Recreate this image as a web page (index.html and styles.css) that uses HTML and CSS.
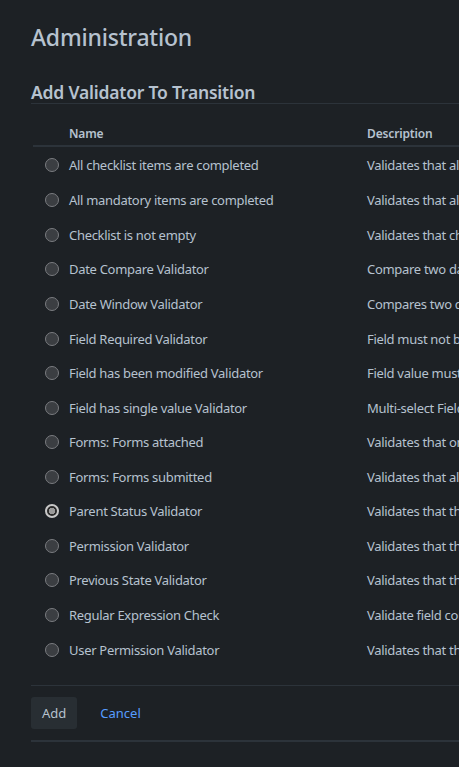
FILE: index.html
```html
<!DOCTYPE html>
<html>
<head>
<meta charset="utf-8">
<link rel="stylesheet" href="styles.css">
</head>
<body>
<div class="page">
  <h1 class="title">Administration</h1>
  <h2 class="subtitle">Add Validator To Transition</h2>
  <table class="grid">
    <thead>
      <tr><th class="c-radio"></th><th class="c-name">Name</th><th class="c-desc">Description</th></tr>
    </thead>
    <tbody>
      <tr><td><span class="radio"></span></td><td>All checklist items are completed</td><td>Validates that all checklist items are completed</td></tr>
      <tr><td><span class="radio"></span></td><td>All mandatory items are completed</td><td>Validates that all mandatory items are completed</td></tr>
      <tr><td><span class="radio"></span></td><td>Checklist is not empty</td><td>Validates that checklist is not empty</td></tr>
      <tr><td><span class="radio"></span></td><td>Date Compare Validator</td><td>Compare two dates</td></tr>
      <tr><td><span class="radio"></span></td><td>Date Window Validator</td><td>Compares two dates</td></tr>
      <tr><td><span class="radio"></span></td><td>Field Required Validator</td><td>Field must not be empty</td></tr>
      <tr><td><span class="radio"></span></td><td>Field has been modified Validator</td><td>Field value must be modified</td></tr>
      <tr><td><span class="radio"></span></td><td>Field has single value Validator</td><td>Multi-select Field</td></tr>
      <tr><td><span class="radio"></span></td><td>Forms: Forms attached</td><td>Validates that one or more forms</td></tr>
      <tr><td><span class="radio"></span></td><td>Forms: Forms submitted</td><td>Validates that all forms</td></tr>
      <tr><td><span class="radio checked"></span></td><td>Parent Status Validator</td><td>Validates that the parent</td></tr>
      <tr><td><span class="radio"></span></td><td>Permission Validator</td><td>Validates that the user</td></tr>
      <tr><td><span class="radio"></span></td><td>Previous State Validator</td><td>Validates that the issue</td></tr>
      <tr><td><span class="radio"></span></td><td>Regular Expression Check</td><td>Validate field contents</td></tr>
      <tr><td><span class="radio"></span></td><td>User Permission Validator</td><td>Validates that the user</td></tr>
    </tbody>
  </table>
  <div class="footer">
    <button class="btn">Add</button>
    <a class="link" href="#">Cancel</a>
  </div>
</div>
</body>
</html>
```
FILE: styles.css
```css
html, body {
  margin: 0;
  padding: 0;
  background: #1d2125;
  overflow: hidden;
}
body {
  font-family: "Noto Sans", "Open Sans", sans-serif;
  color: #b6c2cf;
  width: 459px;
  height: 767px;
}
.page {
  padding: 19px 0 0 31px;
  width: 720px;
}
.title {
  margin: 0;
  font-size: 23px;
  font-weight: 500;
  line-height: 36px;
  color: #b6c2cf;
  letter-spacing: -0.2px;
}
.subtitle {
  margin: 26px 0 0;
  font-size: 17.5px;
  font-weight: 600;
  line-height: 22px;
  color: #b6c2cf;
  padding-bottom: 0;
  border-bottom: 1px solid #2c333a;
  letter-spacing: -0.2px;
}
.grid {
  border-collapse: collapse;
  margin: 21px 0 0 2px;
  width: 690px;
  font-size: 13px;
  letter-spacing: -0.3px;
}
.grid th {
  font-size: 12px;
  font-weight: 600;
  text-align: left;
  padding: 0;
  height: 20px;
  vertical-align: top;
  border-bottom: 2px solid #2c333a;
  color: #b6c2cf;
  letter-spacing: -0.15px;
}
.grid th.c-radio { width: 36px; }
.grid th.c-name { width: 298px; }
.grid td {
  padding: 0;
  height: 34.57px;
  vertical-align: middle;
  white-space: nowrap;
}
.grid tbody tr:first-child td { height: 36px; }
.radio {
  display: block;
  width: 12px;
  height: 12px;
  margin-left: 12px;
  border-radius: 50%;
  background: #3b3e42;
  border: 1px solid #7a7c80;
}
.radio.checked {
  width: 10px;
  height: 10px;
  border: 2px solid #c8c8c8;
  background: radial-gradient(circle, #9a9a9a 0 3px, #2b2b2b 3.5px);
}
.footer {
  margin-top: 18px;
  border-top: 1px solid #2c333a;
  border-bottom: 2px solid #2c333a;
  width: 690px;
  padding: 11px 0 11px;
  display: flex;
  align-items: center;
  gap: 23px;
}
.btn {
  font-family: inherit;
  font-size: 13px;
  color: #b6c2cf;
  background: #282e33;
  border: none;
  border-radius: 3px;
  height: 32px;
  padding: 0 11px;
}
.link {
  color: #579dff;
  text-decoration: none;
  font-size: 13px;
}
```
